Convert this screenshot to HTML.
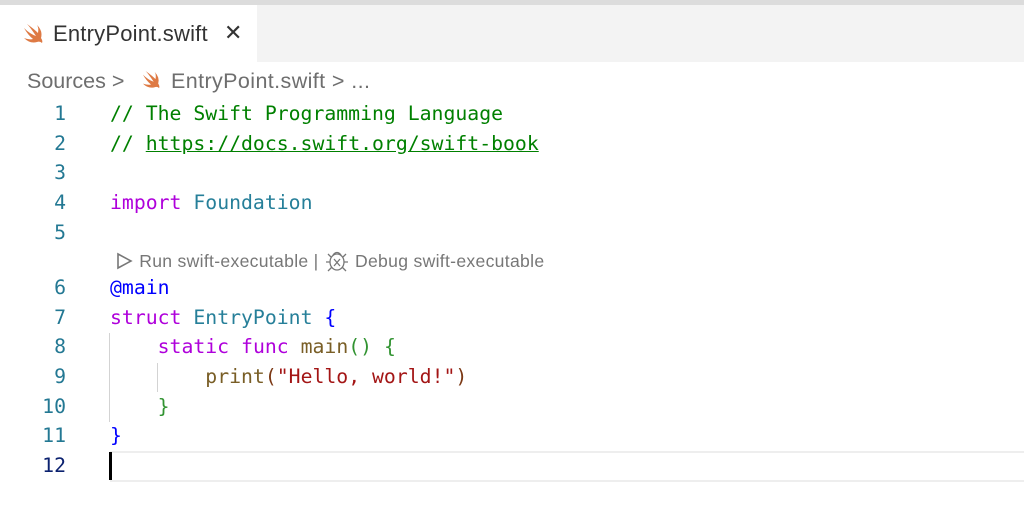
<!DOCTYPE html>
<html><head><meta charset="utf-8"><style>
body{margin:0;width:1024px;height:508px;background:#fff;position:relative;overflow:hidden;font-family:"Liberation Sans",sans-serif}
.top{position:absolute;left:0;top:0;width:1024px;height:5px;background:#dcdcdc}
.tabs{position:absolute;left:0;top:5px;width:1024px;height:57px;background:#f3f3f3}
.tab{position:absolute;left:0;top:0;width:257px;height:57px;background:#fff}
.tab .t{position:absolute;left:53px;top:16px;font-size:22px;color:#333;letter-spacing:0.2px}
.tab .x{position:absolute;left:224px;top:15px;font-size:22px;color:#333}
.bc{position:absolute;top:69px;font-size:21.5px;color:#6e6e6e;white-space:pre}
.ln{position:absolute;left:0;width:66px;text-align:right;font:19.8px "DejaVu Sans Mono",monospace;color:#237893;height:30px;line-height:30px}
.code{position:absolute;left:110px;font:19.8px "DejaVu Sans Mono",monospace;white-space:pre;height:30px;line-height:30px}
.cm{color:#008000}.kw{color:#af00db}.ty{color:#267f99}.bl{color:#0000ff}.fn{color:#795e26}.st{color:#a31515}.gr{color:#319331}
.lens{position:absolute;left:116px;top:248px;font-size:17.6px;color:#777;white-space:pre;letter-spacing:0.3px}
</style></head><body>
<div class="top"></div>
<div class="tabs"><div class="tab">
<svg style="position:absolute;left:22px;top:19px" width="22" height="20" viewBox="0 0 22 20"><path d="M2 4 Q8 10 14 12 Q8 3 5 0 Q12 5 16 9 Q17 4 15 1 Q21 7 19 14 Q21 17 20 19 Q18 17 15 18 Q8 20 2 14 Q8 16 11 15 Q6 11 2 4Z" fill="#de7a44"/></svg>
<div class="t">EntryPoint.swift</div><div class="x">✕</div></div></div>
<div class="bc" style="left:27px">Sources &gt;</div>
<div class="bc" style="left:171px;letter-spacing:0.4px">EntryPoint.swift &gt; ...</div>
<svg style="position:absolute;left:141px;top:71px" width="20" height="18" viewBox="0 0 22 20"><path d="M2 4 Q8 10 14 12 Q8 3 5 0 Q12 5 16 9 Q17 4 15 1 Q21 7 19 14 Q21 17 20 19 Q18 17 15 18 Q8 20 2 14 Q8 16 11 15 Q6 11 2 4Z" fill="#de7a44"/></svg>

<div style="position:absolute;left:110px;top:451px;width:914px;height:27px;border-top:2px solid #eee;border-bottom:2px solid #eee"></div>
<div style="position:absolute;left:109px;top:452px;width:3px;height:28px;background:#000"></div>
<div style="position:absolute;left:109px;top:333px;width:1px;height:89px;background:#d3d3d3"></div>
<div style="position:absolute;left:157px;top:363px;width:1px;height:29px;background:#d3d3d3"></div>

<div class="ln" style="top:99px">1</div><div class="code cm" style="top:99px">// The Swift Programming Language</div>
<div class="ln" style="top:129px">2</div><div class="code cm" style="top:129px">// <u>https://docs.swift.org/swift-book</u></div>
<div class="ln" style="top:158px">3</div>
<div class="ln" style="top:188px">4</div><div class="code" style="top:188px"><span class="kw">import</span> <span class="ty">Foundation</span></div>
<div class="ln" style="top:218px">5</div>
<div class="lens"><svg width="18" height="18" viewBox="0 0 18 18" style="vertical-align:-3px"><path d="M2 2 L15 9 L2 16Z" fill="none" stroke="#777" stroke-width="1.6"/></svg> Run swift-executable | <svg width="26" height="26" viewBox="0 0 26 26" style="vertical-align:-7px"><ellipse cx="13" cy="14" rx="7" ry="8" fill="none" stroke="#777" stroke-width="1.3"/><path d="M9 7 Q13 2 17 7 M10 11 L16 18 M16 11 L10 18 M2 14 H6 M20 14 H24 M4 6 L7 9 M22 6 L19 9 M4 23 L8 19 M22 23 L18 19" stroke="#777" stroke-width="1.3" fill="none"/></svg> Debug swift-executable</div>
<div class="ln" style="top:273px">6</div><div class="code bl" style="top:273px">@main</div>
<div class="ln" style="top:303px">7</div><div class="code" style="top:303px"><span class="kw">struct</span> <span class="ty">EntryPoint</span> <span class="bl">{</span></div>
<div class="ln" style="top:332px">8</div><div class="code" style="top:332px">    <span class="kw">static</span> <span class="kw">func</span> <span class="fn">main</span><span class="gr">()</span> <span class="gr">{</span></div>
<div class="ln" style="top:362px">9</div><div class="code" style="top:362px">        <span class="fn">print</span><span style="color:#7b3814">(</span><span class="st">"Hello, world!"</span><span style="color:#7b3814">)</span></div>
<div class="ln" style="top:392px">10</div><div class="code gr" style="top:392px">    }</div>
<div class="ln" style="top:421px">11</div><div class="code bl" style="top:421px">}</div>
<div class="ln" style="top:451px;color:#0b216f">12</div>
</body></html>
